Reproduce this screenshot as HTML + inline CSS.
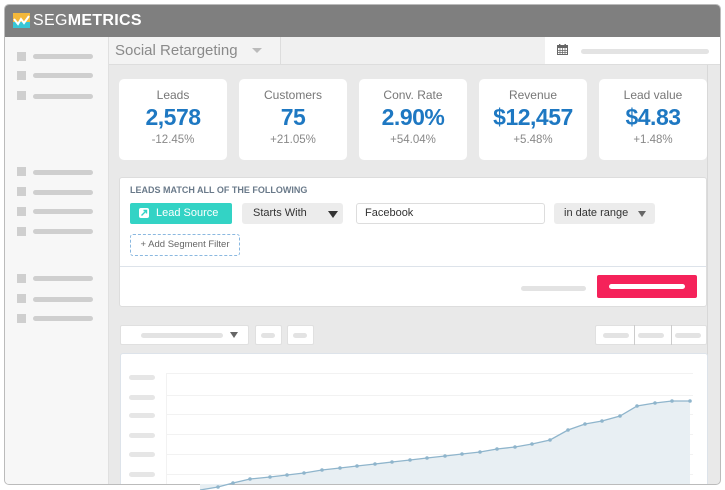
<!DOCTYPE html>
<html><head><style>
*{margin:0;padding:0;box-sizing:border-box}
body{width:725px;height:490px;background:#fff;position:relative;overflow:hidden;font-family:"Liberation Sans",sans-serif}
.a{position:absolute}
.win{left:5px;top:5px;width:715px;height:479px;outline:1px solid #bbb;border-radius:4px;background:#e9e9e9;overflow:hidden}
.hdr{left:0;top:0;width:715px;height:32px;background:#7f7f7f}
.side{left:0;top:32px;width:104px;height:450px;background:#f7f7f7;border-right:1px solid #e0e0e0}
.sq{width:9px;height:9px;background:#cfcfcf}
.ln{width:60px;height:5px;border-radius:3px;background:#cfcfcf}
.card{background:#fff;border-radius:5px;text-align:center}
.card .t{font-size:12px;color:#777;margin-top:9px}
.card .v{font-size:23px;font-weight:bold;color:#1e78c2;margin-top:2px;letter-spacing:-0.5px}
.card .p{font-size:11.5px;color:#888;margin-top:3px}
.bar{height:5px;border-radius:3px;background:#e3e3e3}
</style></head><body>
<div class="a win">
 <div class="a hdr">
  <svg class="a" style="left:8px;top:8px" width="17" height="15" viewBox="0 0 17 15"><rect width="17" height="15" fill="#f4b83a"/><rect y="9" width="17" height="6" fill="#39c6d6"/><path d="M1 6 L5 11 L8 6 L11 10 L16 3" stroke="#fff" stroke-width="2" fill="none"/></svg>
  <div class="a" style="left:28px;top:7px;font-size:16px;color:#fff;letter-spacing:0.3px">SEG<b>METRICS</b></div>
 </div>
 <div class="a side">
  <div class="a sq" style="left:12px;top:15px"></div><div class="a ln" style="left:28px;top:17px"></div>
  <div class="a sq" style="left:12px;top:34px"></div><div class="a ln" style="left:28px;top:36px"></div>
  <div class="a sq" style="left:12px;top:54px"></div><div class="a ln" style="left:28px;top:57px"></div>
  <div class="a sq" style="left:12px;top:130px"></div><div class="a ln" style="left:28px;top:133px"></div>
  <div class="a sq" style="left:12px;top:150px"></div><div class="a ln" style="left:28px;top:153px"></div>
  <div class="a sq" style="left:12px;top:170px"></div><div class="a ln" style="left:28px;top:172px"></div>
  <div class="a sq" style="left:12px;top:190px"></div><div class="a ln" style="left:28px;top:192px"></div>
  <div class="a sq" style="left:12px;top:237px"></div><div class="a ln" style="left:28px;top:239px"></div>
  <div class="a sq" style="left:12px;top:257px"></div><div class="a ln" style="left:28px;top:260px"></div>
  <div class="a sq" style="left:12px;top:277px"></div><div class="a ln" style="left:28px;top:279px"></div>
 </div>
 <div class="a" style="left:104px;top:32px;width:172px;height:28px;background:#f3f3f3;border-right:1px solid #ddd;border-bottom:1px solid #ddd"></div>
 <div class="a" style="left:110px;top:37px;font-size:15px;color:#8a8a8a">Social Retargeting</div>
 <div class="a" style="left:247px;top:43px;border:5px solid transparent;border-top:5px solid #bbb"></div>
 <div class="a" style="left:276px;top:32px;width:264px;height:28px;background:#f0f0f0;border-bottom:1px solid #ddd"></div>
 <div class="a" style="left:540px;top:32px;width:175px;height:28px;background:#fff;border-bottom:1px solid #ddd"></div>
 <svg class="a" style="left:552px;top:39px" width="11" height="11" viewBox="0 0 11 11"><rect x="0.5" y="1.5" width="10" height="9" fill="none" stroke="#666"/><rect x="0.5" y="1.5" width="10" height="2.5" fill="#666"/><path d="M0.5 6.5H10.5M0.5 8.5H10.5M3 4V10.5M5.5 4V10.5M8 4V10.5" stroke="#666" stroke-width="0.7"/><rect x="2" y="0" width="1.4" height="2.5" fill="#666"/><rect x="7.5" y="0" width="1.4" height="2.5" fill="#666"/></svg>
 <div class="a bar" style="left:576px;top:44px;width:128px"></div>
 <div class="a" style="left:702px;top:60px;width:1px;height:420px;background:#d8d8d8"></div>

 <div class="a card" style="left:114px;top:74px;width:108px;height:81px"><div class="t">Leads</div><div class="v">2,578</div><div class="p">-12.45%</div></div>
 <div class="a card" style="left:234px;top:74px;width:108px;height:81px"><div class="t">Customers</div><div class="v">75</div><div class="p">+21.05%</div></div>
 <div class="a card" style="left:354px;top:74px;width:108px;height:81px"><div class="t">Conv. Rate</div><div class="v">2.90%</div><div class="p">+54.04%</div></div>
 <div class="a card" style="left:474px;top:74px;width:108px;height:81px"><div class="t">Revenue</div><div class="v">$12,457</div><div class="p">+5.48%</div></div>
 <div class="a card" style="left:594px;top:74px;width:108px;height:81px"><div class="t">Lead value</div><div class="v">$4.83</div><div class="p">+1.48%</div></div>

 <div class="a" style="left:114px;top:172px;width:588px;height:130px;background:#fff;border:1px solid #ddd;border-radius:3px"></div>
 <div class="a" style="left:125px;top:180px;font-size:9px;font-weight:bold;color:#6a7a8a">LEADS MATCH ALL OF THE FOLLOWING</div>
 <div class="a" style="left:125px;top:198px;width:102px;height:21px;background:#33d3c5;border-radius:2px;color:#fff;font-size:11px;line-height:21px;padding-left:26px">Lead Source</div>
 <div class="a" style="left:134px;top:203px;width:10px;height:10px;background:#fff;border-radius:2px"></div>
 <svg class="a" style="left:135px;top:204px" width="8" height="8"><path d="M1.5 6.5L6.5 1.5M3.5 1.5H6.5V4.5" stroke="#33d3c5" stroke-width="1.4" fill="none"/></svg>
 <div class="a" style="left:237px;top:198px;width:101px;height:21px;background:#ececec;border-radius:3px;font-size:11px;line-height:21px;padding-left:11px;color:#333">Starts With</div>
 <div class="a" style="left:323px;top:206px;border:5px solid transparent;border-top:7px solid #333"></div>
 <div class="a" style="left:351px;top:198px;width:189px;height:21px;border:1px solid #ddd;border-radius:3px;font-size:11px;line-height:19px;padding-left:8px;color:#333">Facebook</div>
 <div class="a" style="left:549px;top:198px;width:101px;height:21px;background:#ececec;border-radius:3px;font-size:11px;line-height:21px;padding-left:10px;color:#333">in date range</div>
 <div class="a" style="left:633px;top:206px;border:4px solid transparent;border-top:6px solid #666"></div>
 <div class="a" style="left:125px;top:229px;width:110px;height:22px;border:1px dashed #8ab8e0;border-radius:3px;font-size:9.5px;line-height:20px;text-align:center;color:#666">+ Add Segment Filter</div>
 <div class="a" style="left:115px;top:261px;width:586px;height:1px;background:#dde3ea"></div>
 <div class="a bar" style="left:516px;top:281px;width:65px"></div>
 <div class="a" style="left:592px;top:270px;width:100px;height:23px;background:#f5225a;border-radius:2px"></div>
 <div class="a" style="left:604px;top:279px;width:76px;height:5px;border-radius:3px;background:#fff"></div>

 <div class="a" style="left:115px;top:320px;width:129px;height:20px;background:#fff;border:1px solid #e0e0e0;border-radius:2px"></div>
 <div class="a bar" style="left:136px;top:328px;width:82px"></div>
 <div class="a" style="left:225px;top:327px;border:4px solid transparent;border-top:6px solid #666"></div>
 <div class="a" style="left:250px;top:320px;width:27px;height:20px;background:#fff;border:1px solid #e0e0e0;border-radius:2px"></div>
 <div class="a bar" style="left:256px;top:328px;width:14px"></div>
 <div class="a" style="left:282px;top:320px;width:27px;height:20px;background:#fff;border:1px solid #e0e0e0;border-radius:2px"></div>
 <div class="a bar" style="left:288px;top:328px;width:14px"></div>
 <div class="a" style="left:590px;top:320px;width:112px;height:20px;background:#fff;border:1px solid #e0e0e0;border-radius:2px"></div>
 <div class="a" style="left:629px;top:320px;width:1px;height:20px;background:#ccc"></div>
 <div class="a" style="left:666px;top:320px;width:1px;height:20px;background:#ccc"></div>
 <div class="a bar" style="left:598px;top:328px;width:26px"></div>
 <div class="a bar" style="left:633px;top:328px;width:26px"></div>
 <div class="a bar" style="left:670px;top:328px;width:26px"></div>

 <div class="a" style="left:115px;top:348px;width:588px;height:140px;background:#fff;border:1px solid #dde3ea;border-radius:3px"></div>
</div>
<svg class="a" style="left:0;top:0" width="725" height="490">
 <g fill="#e6e6e6">
  <rect x="129" y="375" width="26" height="5" rx="2.5"/><rect x="129" y="395" width="26" height="5" rx="2.5"/><rect x="129" y="413" width="26" height="5" rx="2.5"/><rect x="129" y="433" width="26" height="5" rx="2.5"/><rect x="129" y="452" width="26" height="5" rx="2.5"/><rect x="129" y="472" width="26" height="5" rx="2.5"/>
 </g>
 <g stroke="#f2f2f2"><path d="M166 373.5H693M166 395.5H693M166 414.5H693M166 434.5H693M166 454.5H693M166 474.5H693M166.5 373V484"/></g>
 <polygon fill="#e8eff3" points="200,490 218,487 233,483 250,479 270,477 287,475 304,473 322,470 340,468 357,466 375,464 392,462 410,460 427,458 445,456 462,454 480,452 497,449 515,447 532,444 550,440 568,430 585,424 602,421 620,416 637,406 655,403 672,401 690,401 690,484 200,484"/>
 <polyline fill="none" stroke="#8fb5cc" stroke-width="1.3" points="200,490 218,487 233,483 250,479 270,477 287,475 304,473 322,470 340,468 357,466 375,464 392,462 410,460 427,458 445,456 462,454 480,452 497,449 515,447 532,444 550,440 568,430 585,424 602,421 620,416 637,406 655,403 672,401 690,401"/>
 <g fill="#8fb5cc">
  <circle cx="218" cy="487" r="1.8"/><circle cx="233" cy="483" r="1.8"/><circle cx="250" cy="479" r="1.8"/><circle cx="270" cy="477" r="1.8"/><circle cx="287" cy="475" r="1.8"/><circle cx="304" cy="473" r="1.8"/><circle cx="322" cy="470" r="1.8"/><circle cx="340" cy="468" r="1.8"/><circle cx="357" cy="466" r="1.8"/><circle cx="375" cy="464" r="1.8"/><circle cx="392" cy="462" r="1.8"/><circle cx="410" cy="460" r="1.8"/><circle cx="427" cy="458" r="1.8"/><circle cx="445" cy="456" r="1.8"/><circle cx="462" cy="454" r="1.8"/><circle cx="480" cy="452" r="1.8"/><circle cx="497" cy="449" r="1.8"/><circle cx="515" cy="447" r="1.8"/><circle cx="532" cy="444" r="1.8"/><circle cx="550" cy="440" r="1.8"/><circle cx="568" cy="430" r="1.8"/><circle cx="585" cy="424" r="1.8"/><circle cx="602" cy="421" r="1.8"/><circle cx="620" cy="416" r="1.8"/><circle cx="637" cy="406" r="1.8"/><circle cx="655" cy="403" r="1.8"/><circle cx="672" cy="401" r="1.8"/><circle cx="690" cy="401" r="1.8"/>
 </g>
</svg>
</body></html>
